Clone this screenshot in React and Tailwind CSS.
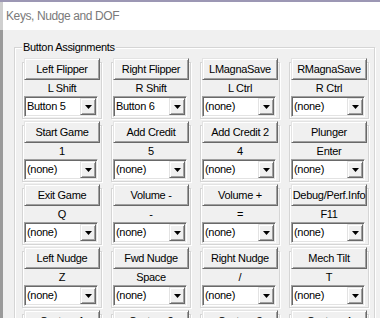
import React from "react";

const rows = [
  [
    ["Left Flipper", "L Shift", "Button 5"],
    ["Right Flipper", "R Shift", "Button 6"],
    ["LMagnaSave", "L Ctrl", "(none)"],
    ["RMagnaSave", "R Ctrl", "(none)"],
  ],
  [
    ["Start Game", "1", "(none)"],
    ["Add Credit", "5", "(none)"],
    ["Add Credit 2", "4", "(none)"],
    ["Plunger", "Enter", "(none)"],
  ],
  [
    ["Exit Game", "Q", "(none)"],
    ["Volume -", "-", "(none)"],
    ["Volume +", "=", "(none)"],
    ["Debug/Perf.Info", "F11", "(none)"],
  ],
  [
    ["Left Nudge", "Z", "(none)"],
    ["Fwd Nudge", "Space", "(none)"],
    ["Right Nudge", "/", "(none)"],
    ["Mech Tilt", "T", "(none)"],
  ],
  [
    ["Custom 1", "", "(none)"],
    ["Custom 2", "", "(none)"],
    ["Custom 3", "", "(none)"],
    ["Custom 4", "", "(none)"],
  ],
];

function Cell({ name, keyName, value }) {
  return (
    <div className="w-[80px] h-[57px] border border-[#d5d5d5] shadow-[inset_1px_1px_0_#ffffff,1px_1px_0_#ffffff] flex flex-col">
      <div className="-mt-[5px] ml-px h-[22px] w-[76px] shrink-0 flex items-center justify-center overflow-hidden whitespace-nowrap bg-[#f0f0f0] border border-t-[#e3e3e3] border-l-[#e3e3e3] border-r-[#696969] border-b-[#696969] shadow-[inset_1px_1px_0_#ffffff,inset_-1px_-1px_0_#a0a0a0]">
        {name}
      </div>
      <div className="h-[16px] shrink-0 flex items-center justify-center whitespace-nowrap">
        {keyName}
      </div>
      <div className="ml-px h-[21px] w-[74px] shrink-0 flex items-center bg-white border border-t-[#a0a0a0] border-l-[#a0a0a0] border-r-[#ffffff] border-b-[#ffffff] shadow-[inset_1px_1px_0_#696969,inset_-1px_-1px_0_#e3e3e3]">
        <span className="flex-1 pl-[2px] whitespace-nowrap overflow-hidden">{value}</span>
        <div className="mr-px h-[17px] w-[16px] flex items-center justify-center bg-[#f0f0f0] border border-t-[#e3e3e3] border-l-[#e3e3e3] border-r-[#696969] border-b-[#696969] shadow-[inset_1px_1px_0_#ffffff,inset_-1px_-1px_0_#a0a0a0]">
          <svg width="7" height="4" viewBox="0 0 7 4">
            <path d="M0 0H7L3.5 4Z" fill="#000" />
          </svg>
        </div>
      </div>
    </div>
  );
}

export default function App() {
  return (
    <div className="w-[380px] h-[318px] overflow-hidden flex flex-col bg-[#f0f0f0] font-['Liberation_Sans',Arial,sans-serif] text-[11px] tracking-[-0.3px] text-black">
      <div className="h-[2px] shrink-0 bg-[#9c97b4]" />
      <div className="flex-1 flex min-h-0">
        <div className="w-[3px] shrink-0 flex flex-col">
          <div className="h-[28px] bg-[#cfcfcf]" />
          <div className="flex-1 bg-[#9a9a9a]" />
        </div>
        <div className="flex-1 flex flex-col min-w-0">
          <div className="h-[28px] shrink-0 bg-white flex items-center pl-[3px] text-[12px] tracking-[-0.4px] text-[#7a7a7a]">
            Keys, Nudge and DOF
          </div>
          <div className="flex-1 pl-[11px] pt-[17px]">
            <div className="relative w-[361px] border border-[#d5d5d5] shadow-[inset_1px_1px_0_#ffffff,1px_1px_0_#ffffff] pl-[7px] pt-[14px] pb-[10px]">
              <div className="absolute left-[7px] -top-[8px] px-[1px] bg-[#f0f0f0] leading-[14px]">
                Button Assignments
              </div>
              <div className="grid grid-cols-[repeat(4,80px)] gap-x-[9px] gap-y-[6px]">
                {rows.flat().map(([n, k, v]) => (
                  <Cell key={n} name={n} keyName={k} value={v} />
                ))}
              </div>
            </div>
          </div>
        </div>
      </div>
    </div>
  );
}
